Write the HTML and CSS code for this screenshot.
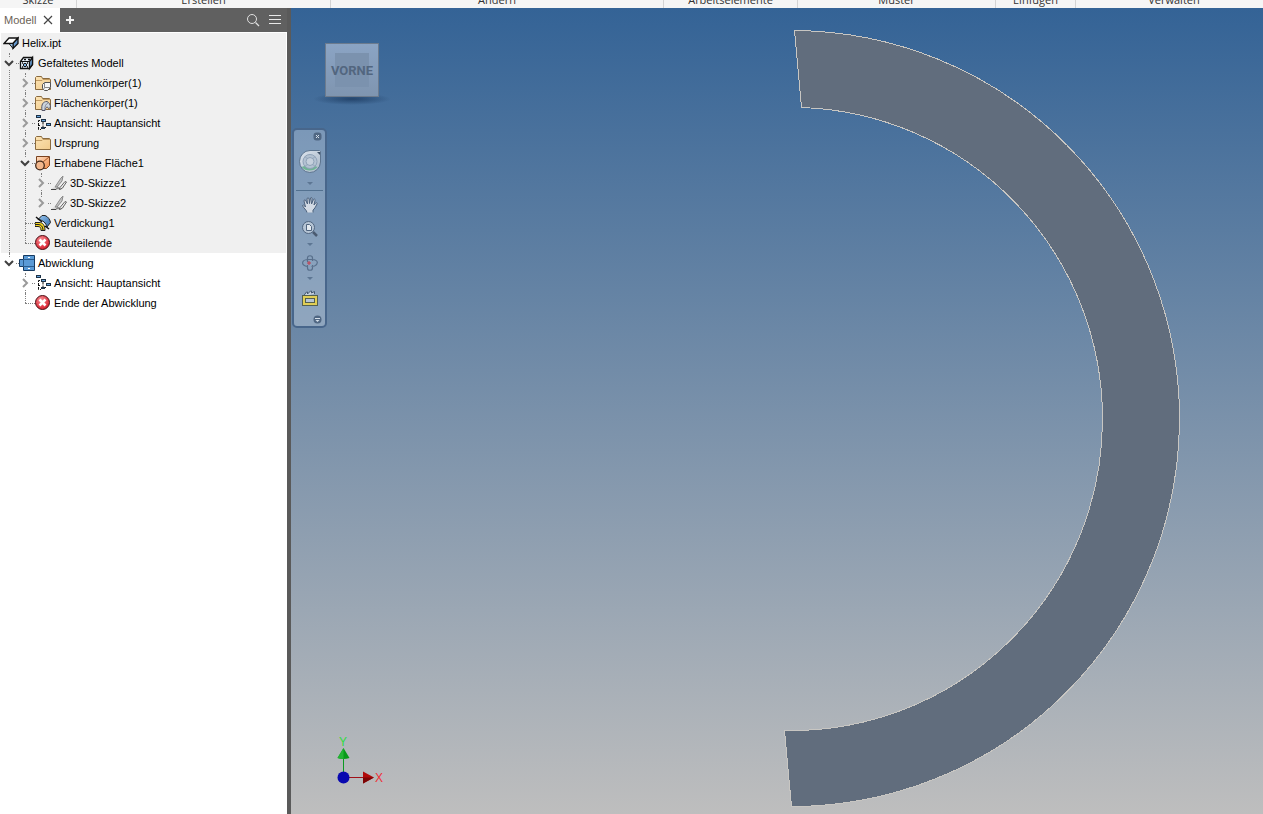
FILE: index.html
```
<!DOCTYPE html>
<html lang="de">
<head>
  <meta charset="UTF-8">
  <meta name="viewport" content="width=device-width, initial-scale=1.0">
  <title>Helix.ipt</title>
  <link rel="stylesheet" href="styles.css">
</head>
<body>
  <!-- shared icons -->
  <svg class="defs" aria-hidden="true">
    <defs>
      <linearGradient id="blue" x1="0" y1="0" x2="1" y2="1">
        <stop offset="0" stop-color="#9cc8f0"/>
        <stop offset="1" stop-color="#2f6cae"/>
      </linearGradient>
      <linearGradient id="sand" x1="0" y1="0" x2="1" y2="1">
        <stop offset="0" stop-color="#fbe3b4"/>
        <stop offset="1" stop-color="#f2cb8c"/>
      </linearGradient>
      <linearGradient id="peach" x1="0" y1="0" x2="1" y2="1">
        <stop offset="0" stop-color="#ffe0c4"/>
        <stop offset="1" stop-color="#f08a48"/>
      </linearGradient>
      <radialGradient id="red" cx=".4" cy=".3" r=".7">
        <stop offset="0" stop-color="#f58a90"/>
        <stop offset="1" stop-color="#d8202e"/>
      </radialGradient>
      <linearGradient id="silver" x1="0" y1="0" x2="1" y2="1">
        <stop offset="0" stop-color="#dde5ee"/>
        <stop offset="1" stop-color="#a9b7c7"/>
      </linearGradient>
      <radialGradient id="shade">
        <stop offset="0" stop-color="#1c3a60" stop-opacity=".8"/>
        <stop offset="1" stop-color="#1c3a60" stop-opacity="0"/>
      </radialGradient>
    </defs>
    <symbol id="right" viewBox="0 0 12 12">
      <path d="M4 2l4 4-4 4" fill="none" stroke="#9a9a9a" stroke-width="2"/>
    </symbol>
    <symbol id="down" viewBox="0 0 12 12">
      <path d="M2 4l4 4 4-4" fill="none" stroke="#404040" stroke-width="2"/>
    </symbol>
    <symbol id="folder" viewBox="0 0 16 16">
      <path d="M.5 14.500V2.500l1-1h5l1 2h7l1 1v10z" fill="url(#sand)" stroke="#8a6a3e"/>
      <path d="M1 5.500h6l1-1h7" fill="none" stroke="#c09a62"/>
    </symbol>
    <symbol id="view" viewBox="0 0 16 16">
      <path d="M5 5.500H3.500v9H6M8 6.500v6h3M3 10.500h2" fill="none" stroke="#111" stroke-dasharray="3 1"/>
      <path d="M1 0h5v3H1zM6 4h5v3H6zM11 8h5v3h-5zM6 12h4v2H6z" fill="#1d3247"/>
      <path d="M2 1h3v1H2zM7 5h3v1H7zM12 9h3v1h-3z" fill="#69a5dc"/>
    </symbol>
    <symbol id="end" viewBox="0 0 16 16">
      <circle cx="7.500" cy="7.500" r="7" fill="url(#red)" stroke="#4a0e14"/>
      <path d="M4.500 4.500l6 6M10.500 4.500l-6 6" stroke="#fff" stroke-width="2.600"/>
    </symbol>
    <symbol id="sketch" viewBox="0 0 16 16">
      <path d="M.500 13.500l4-2h9l-3 3.500H4z" fill="#d8d8d8"/>
      <path d="M4 12L10 3l2-2-1 5-5 6z" fill="#c6c6c6" stroke="#8a8a8a"/>
      <path d="M9 12.500l5-6 1.500.500-4 6-3 1.500z" fill="#eee" stroke="#666"/>
      <path d="M0 14.500h5l2-2 2 2" fill="none" stroke="#444"/>
    </symbol>
    <symbol id="caret" viewBox="0 0 6 4">
      <path d="M0 0h6L3 3z" fill="#5d7693"/>
    </symbol>
  </svg>

  <header class="ribbon">
    <div class="group">Skizze</div>
    <div class="group">Erstellen</div>
    <div class="group">Ändern</div>
    <div class="group">Arbeitselemente</div>
    <div class="group">Muster</div>
    <div class="group">Einfügen</div>
    <div class="group">Verwalten</div>
  </header>

  <main class="workspace">
    <aside class="browser">
      <div class="tabs">
        <div class="tab">
          <span>Modell</span>
          <button type="button" aria-label="Schließen">
            <svg width="10" height="10" viewBox="0 0 10 10"><path d="M1 1l8 8M9 1L1 9" stroke="#444" stroke-width="1.200"/></svg>
          </button>
        </div>
        <button class="add" type="button" aria-label="Hinzufügen">
          <svg width="8" height="8" viewBox="0 0 8 8"><path d="M4 0v8M0 4h8" stroke="#f0f0f0" stroke-width="2"/></svg>
        </button>
        <button class="search" type="button" aria-label="Suchen">
          <svg width="14" height="14" viewBox="0 0 14 14"><circle cx="6" cy="6" r="4.500" fill="none" stroke="#e0e0e0"/><path d="M9.500 9.500l3.500 3.500" stroke="#e0e0e0" stroke-width="1.200"/></svg>
        </button>
        <button class="menu" type="button" aria-label="Menü">
          <svg width="12" height="10" viewBox="0 0 12 10"><path d="M0 .5h12M0 4.500h12M0 8.500h12" stroke="#e8e8e8"/></svg>
        </button>
      </div>

      <div class="tree">
        <div class="row root">
          <svg class="icon" viewBox="0 0 16 16">
            <path d="M1 8.500l5-5.500h9l-5 5.500z" fill="#fff" stroke="#111" stroke-width="1.300"/>
            <path d="M10 8.500l5-5.500v5.500l-5 5z" fill="url(#blue)" stroke="#111" stroke-width="1.300"/>
            <path d="M1 8.500h5l4 5v-5z" fill="#9cc4ea" stroke="#111"/>
          </svg>
          <span>Helix.ipt</span>
        </div>
        <ul>
          <li class="folded">
            <div class="row">
              <button class="toggle" type="button" aria-label="Zuklappen"><svg><use href="#down"/></svg></button>
              <svg class="icon" viewBox="0 0 16 16">
                <path d="M1.500 6.500l3-4h9v7l-3 4h-9z" fill="#e8f1fa" stroke="#111" stroke-width="1.300"/>
                <path d="M10.500 6.500l3-4v7l-3 4z" fill="url(#blue)" stroke="#111" stroke-width="1.300"/>
                <path d="M1.500 6.500h9" stroke="#111"/>
                <circle cx="6" cy="10" r="1.700" fill="#7db4e6" stroke="#111"/>
                <path d="M5 4.500h2M9 4.500h2M3 8h1M8 8h1M3 12h1M8 12h1" stroke="#111" stroke-width="1.500"/>
              </svg>
              <span>Gefaltetes Modell</span>
            </div>
            <ul>
              <li>
                <div class="row">
                  <button class="toggle" type="button" aria-label="Aufklappen"><svg><use href="#right"/></svg></button>
                  <svg class="icon" viewBox="0 0 16 16">
                    <use href="#folder"/>
                    <path d="M7.500 9.500l2-2h6v5l-3 3h-3l-2-2z" fill="#f6f6f6" stroke="#555"/>
                    <path d="M9.500 7.500v5h6M9.500 12.500l-1 2" fill="none" stroke="#888"/>
                  </svg>
                  <span>Volumenkörper(1)</span>
                </div>
              </li>
              <li>
                <div class="row">
                  <button class="toggle" type="button" aria-label="Aufklappen"><svg><use href="#right"/></svg></button>
                  <svg class="icon" viewBox="0 0 16 16">
                    <use href="#folder"/>
                    <path d="M7 15.500c-1-6 1-9 5-9 2 1 3.500 3 3.500 6l-2 1c-.5-2-3-2-3.500 2z" fill="#ccd5dd" stroke="#556"/>
                    <path d="M10 15c-.5-4 1-6 3-7" fill="none" stroke="#889"/>
                  </svg>
                  <span>Flächenkörper(1)</span>
                </div>
              </li>
              <li>
                <div class="row">
                  <button class="toggle" type="button" aria-label="Aufklappen"><svg><use href="#right"/></svg></button>
                  <svg class="icon"><use href="#view"/></svg>
                  <span>Ansicht: Hauptansicht</span>
                </div>
              </li>
              <li>
                <div class="row">
                  <button class="toggle" type="button" aria-label="Aufklappen"><svg><use href="#right"/></svg></button>
                  <svg class="icon"><use href="#folder"/></svg>
                  <span>Ursprung</span>
                </div>
              </li>
              <li>
                <div class="row">
                  <button class="toggle" type="button" aria-label="Zuklappen"><svg><use href="#down"/></svg></button>
                  <svg class="icon" viewBox="0 0 16 16">
                    <path d="M1.500 1.500h13v9l-3 3h-5l-5-6z" fill="url(#peach)" stroke="#7a4220"/>
                    <circle cx="5" cy="10.500" r="4.300" fill="#f3b78c" stroke="#42291a" stroke-width="1.300"/>
                    <path d="M8 7l6-5" stroke="#a5592c"/>
                  </svg>
                  <span>Erhabene Fläche1</span>
                </div>
                <ul>
                  <li>
                    <div class="row">
                      <button class="toggle" type="button" aria-label="Aufklappen"><svg><use href="#right"/></svg></button>
                      <svg class="icon"><use href="#sketch"/></svg>
                      <span>3D-Skizze1</span>
                    </div>
                  </li>
                  <li>
                    <div class="row">
                      <button class="toggle" type="button" aria-label="Aufklappen"><svg><use href="#right"/></svg></button>
                      <svg class="icon"><use href="#sketch"/></svg>
                      <span>3D-Skizze2</span>
                    </div>
                  </li>
                </ul>
              </li>
              <li>
                <div class="row leaf">
                  <svg class="icon" viewBox="0 0 16 16">
                    <path d="M0 7.500h4c4 0 6 3 6 8H6c0-3-1-4-3-4H0z" fill="#f8d820" stroke="#222"/>
                    <path d="M0 9.500h3c3 0 5 2 5 6" fill="none" stroke="#222"/>
                    <path d="M3 4.500l4-4h3c3 1 5 4 5.500 7L12 12C11 8 8 5 3 4.500z" fill="url(#blue)" stroke="#222"/>
                    <path d="M1 2l6 5M10 11l4 3" stroke="#111" stroke-width="1.500"/>
                  </svg>
                  <span>Verdickung1</span>
                </div>
              </li>
              <li>
                <div class="row leaf">
                  <svg class="icon"><use href="#end"/></svg>
                  <span>Bauteilende</span>
                </div>
              </li>
            </ul>
          </li>
          <li>
            <div class="row">
              <button class="toggle" type="button" aria-label="Zuklappen"><svg><use href="#down"/></svg></button>
              <svg class="icon" viewBox="0 0 16 16">
                <path d="M.5 4.500h4v-4h11v15h-11v-4h-4z" fill="#5a9ad6" stroke="#163a60"/>
                <path d="M4.500 4v8M5 4.500h10M5 11.500h10" stroke="#2a5c8e"/>
                <path d="M9 2.500h2M9 13.500h2" stroke="#fff"/>
              </svg>
              <span>Abwicklung</span>
            </div>
            <ul>
              <li>
                <div class="row">
                  <button class="toggle" type="button" aria-label="Aufklappen"><svg><use href="#right"/></svg></button>
                  <svg class="icon"><use href="#view"/></svg>
                  <span>Ansicht: Hauptansicht</span>
                </div>
              </li>
              <li>
                <div class="row leaf">
                  <svg class="icon"><use href="#end"/></svg>
                  <span>Ende der Abwicklung</span>
                </div>
              </li>
            </ul>
          </li>
        </ul>
      </div>
    </aside>

    <section class="viewport">
      <svg class="model" viewBox="0 0 972 806" preserveAspectRatio="xMaxYMid meet">
        <path d="M503.500 22.500A388 388 0 0 1 888.500 410.500A388 388 0 0 1 500.500 798.500L493.500 722.500A311.500 311.500 0 0 0 811.500 411A311.500 311.500 0 0 0 510.500 99.500Z"/>
      </svg>

      <svg class="shadow" viewBox="0 0 78 12"><ellipse cx="39" cy="6" rx="39" ry="6" fill="url(#shade)"/></svg>
      <button class="cube" type="button"><span>VORNE</span></button>

      <nav class="navbar">
        <button class="close" type="button" aria-label="Schließen">
          <svg width="9" height="9" viewBox="0 0 9 9"><rect x=".5" y=".5" width="8" height="8" rx="3" fill="#506783"/><path d="M3 3l3 3M6 3L3 6" stroke="#d5dfea"/></svg>
        </button>
        <button class="wheel" type="button" aria-label="Navigationsrad">
          <svg width="24" height="24" viewBox="0 0 24 24">
            <path d="M12 .5h9.500l1 1V12A10.500 11 0 1 1 12 .5z" fill="url(#silver)" stroke="#5d7590"/>
            <path d="M3.500 17a10.500 10 0 0 0 16 0l-3-1h-10z" fill="#6fb394"/>
            <circle cx="12" cy="11.500" r="7" fill="#b4c2d2" stroke="#8fa2b7"/>
            <circle cx="12" cy="11.500" r="4" fill="#c5d0dc" stroke="#8fa2b7"/>
            <path d="M7 6.500l2 2M17 6.500l-2 2M7 16.500l2-2M17 16.500l-2-2" stroke="#8fa2b7"/>
            <path d="M19 2h3v3z" fill="#3c4f66"/>
          </svg>
        </button>
        <button class="more" type="button" aria-label="Räder"><svg width="6" height="4"><use href="#caret"/></svg></button>
        <hr>
        <button class="tool" type="button" aria-label="Pan">
          <svg width="16" height="16" viewBox="0 0 16 16">
            <path d="M5 15.500c0-2-4-5-4.500-7 1-1 2 0 3 1.500L2 4c0-1.500 1.500-1.500 2 0l1.500 3L5 2c0-1.500 2-1.500 2 0l.5 4.500L8.500 1c.5-1 2-.5 1.500 1l-.5 5 2-4.500c.5-1 2-.5 1.500 1L12 8l1.500-2c1-1 2 0 1.500 1-1.500 3-2.500 5-4 6v2.500" fill="#d2dae4" stroke="#4b607b"/>
          </svg>
        </button>
        <button class="zoom" type="button" aria-label="Zoom">
          <svg width="16" height="16" viewBox="0 0 16 16">
            <circle cx="6.500" cy="6.500" r="6" fill="#b6c5d5" stroke="#50657f"/>
            <path d="M4.500 3.500h3l2 2v4h-5z" fill="#e4eaf0" stroke="#50657f"/>
            <path d="M11 11l4 4" stroke="#4b5b70" stroke-width="2.500"/>
          </svg>
        </button>
        <button class="more tall" type="button" aria-label="Zoomoptionen"><svg width="6" height="4"><use href="#caret"/></svg></button>
        <button class="tool" type="button" aria-label="Orbit">
          <svg width="16" height="16" viewBox="0 0 16 16">
            <path d="M5.500 11.500c-7-1-6-6.500 0-7h5c6 .5 6 4.500 2 6.500l-3 .5M5.500 7V3c0-3 5-3 5 0v3M5.500 10v3c0 3 5 3 5 0v-3" fill="none" stroke="#586f8b" stroke-width="1.200"/>
            <path d="M7 6v4M5 8h4" stroke="#c43c4c"/>
          </svg>
        </button>
        <button class="more" type="button" aria-label="Orbitoptionen"><svg width="6" height="4"><use href="#caret"/></svg></button>
        <button class="look" type="button" aria-label="Ausrichten nach">
          <svg width="16" height="16" viewBox="0 0 16 16">
            <path d="M1.500 6l3-4h1v2l3-3h1v2l3-1.500V4" fill="#c4d0dc" stroke="#465a73"/>
            <rect x=".5" y="5.500" width="15" height="10" fill="#e0ce55" stroke="#54604f"/>
            <rect x="3.500" y="8.500" width="9" height="4" fill="#b9c6d2" stroke="#54604f"/>
          </svg>
        </button>
        <button class="close" type="button" aria-label="Anpassen">
          <svg width="9" height="9" viewBox="0 0 9 9"><circle cx="4.500" cy="4.500" r="4" fill="#506783"/><path d="M2 3.500h5" stroke="#d5dfea"/><path d="M2.500 5h4l-2 2z" fill="#d5dfea"/></svg>
        </button>
      </nav>

      <svg class="triad" viewBox="0 0 56 56">
        <path d="M13.500 25v20" stroke="#0a9a20"/>
        <path d="M13.500 14l6 10q-6 2-12 0z" fill="#089a18"/>
        <path d="M13.500 14v11q-4 0-6-1z" fill="#22b432"/>
        <path d="M13 43.500h20" stroke="#a01018"/>
        <path d="M33 37.500v12l11-6z" fill="#b00808"/>
        <path d="M33 43.500v6l11-6z" fill="#7c0404"/>
        <circle cx="13.500" cy="43.500" r="6" fill="#0808b0"/>
        <text class="axis-y" x="9" y="12">Y</text>
        <text class="axis-x" x="45" y="48">X</text>
      </svg>
    </section>
  </main>
</body>
</html>
```

FILE: styles.css
```
*{
  margin: 0;
  padding: 0;
  box-sizing: border-box;
}
ul,li{
  list-style: none;
}
body{
  display: flex;
  flex-direction: column;
  height: 100vh;
  overflow: hidden;
  font-family: "Liberation Sans", Arial, sans-serif;
  font-size: 11px;
  color: #000;
}
button{
  display: flex;
  align-items: center;
  justify-content: center;
  border: 0;
  background: none;
  font: inherit;
}
svg{
  display: block;
  flex: none;
}
.defs{
  position: absolute;
  width: 0;
  height: 0;
}

/* ribbon: only the lower edge of the group titles is visible */
.ribbon{
  display: grid;
  grid-template-columns: 77px 254px 333px 134px 198px 80px 197px;
  grid-template-rows: 8px;
  align-items: end;
  overflow: hidden;
  background-color: #f5f5f5;
}
.group{
  height: 16px;
  border-right: 1px solid #d4d4d4;
  font-family: "Open Sans", "Noto Sans", sans-serif;
  font-size: 11px;
  line-height: 16px;
  text-align: center;
  color: #333;
}

.workspace{
  display: flex;
  flex: 1;
  min-height: 0;
}

/* model browser */
.browser{
  width: 291px;
  flex: none;
  border-right: 4px solid #5a5a5a;
  background-color: #fff;
}
.tabs{
  display: flex;
  height: 24px;
  padding-right: 2px;
  background-color: #606060;
}
.tab{
  display: flex;
  align-items: center;
  gap: 7px;
  width: 60px;
  padding-left: 4px;
  background-color: #fff;
  color: #6b6257;
}
.add{
  width: 20px;
}
.search{
  width: 24px;
  margin-left: auto;
}
.menu{
  width: 20px;
}
.tree{
  padding: 1px;
}
.row{
  display: flex;
  align-items: center;
  height: 20px;
  white-space: nowrap;
}
.root{
  padding-left: 2px;
  background-color: #f0f0f0;
}
.tree li{
  --panel: #fff;
  position: relative;
}
.tree .folded,
.tree .folded li{
  --panel: #f0f0f0;
  background-color: var(--panel);
}
.tree li ul{
  margin-left: 16px;
}
/* dotted guide lines */
.tree li::before{
  content: '';
  position: absolute;
  top: 0;
  bottom: 0;
  left: 8px;
  border-left: 1px dotted #808080;
}
.tree li:last-child::before{
  bottom: auto;
  height: 10px;
}
.tree li::after{
  content: '';
  position: absolute;
  top: 10px;
  left: 8px;
  width: 10px;
  border-top: 1px dotted #808080;
}
.toggle{
  position: relative;
  z-index: 1;
  width: 12px;
  height: 12px;
  margin: 0 4px 0 2px;
  background-color: var(--panel);
}
.toggle svg{
  width: 12px;
  height: 12px;
}
.leaf{
  padding-left: 18px;
}
.icon{
  width: 16px;
  height: 16px;
  margin-right: 3px;
}

/* 3d viewport */
.viewport{
  position: relative;
  flex: 1;
  min-width: 0;
  background-image: linear-gradient(#346396, #bebebe);
}
.model{
  width: 100%;
  height: 100%;
}
.model path{
  fill: #616d7d;
  stroke: #c8c6c2;
  shape-rendering: crispEdges;
}
.shadow{
  position: absolute;
  top: 85px;
  left: 22px;
  width: 78px;
  height: 12px;
}
.cube{
  position: absolute;
  top: 35px;
  left: 34px;
  width: 54px;
  height: 54px;
  border: 1px solid #6c7b8e;
  background-image: linear-gradient(#8ba4c4, #7f95b0);
}
.cube span{
  width: 34px;
  height: 34px;
  display: flex;
  align-items: center;
  justify-content: center;
  background-color: #7b92ae;
  font-family: Roboto, Arial, sans-serif;
  font-size: 13px;
  font-weight: bold;
  color: #52667f;
}
.navbar{
  position: absolute;
  top: 120px;
  left: 1px;
  width: 35px;
  padding: 1px 0;
  border: 2px solid #48668b;
  border-radius: 5px;
  background-color: rgba(200, 212, 228, .4);
}
.navbar button{
  width: 100%;
}
.navbar hr{
  margin: 3px 2px 1px;
  border: 0;
  border-top: 1px solid #52708f;
}
.navbar .close{
  height: 11px;
  padding-right: 3px;
  justify-content: flex-end;
}
.wheel{
  height: 39px;
}
.more{
  height: 6px;
}
.tall{
  height: 10px;
}
.tool{
  height: 26px;
}
.zoom{
  height: 22px;
}
.look{
  height: 32px;
}
.triad{
  position: absolute;
  left: 39px;
  bottom: 24px;
  width: 56px;
  height: 56px;
}
.triad text{
  font-size: 12px;
}
.axis-y{
  fill: #30dc40;
}
.axis-x{
  fill: #f03038;
}
```
